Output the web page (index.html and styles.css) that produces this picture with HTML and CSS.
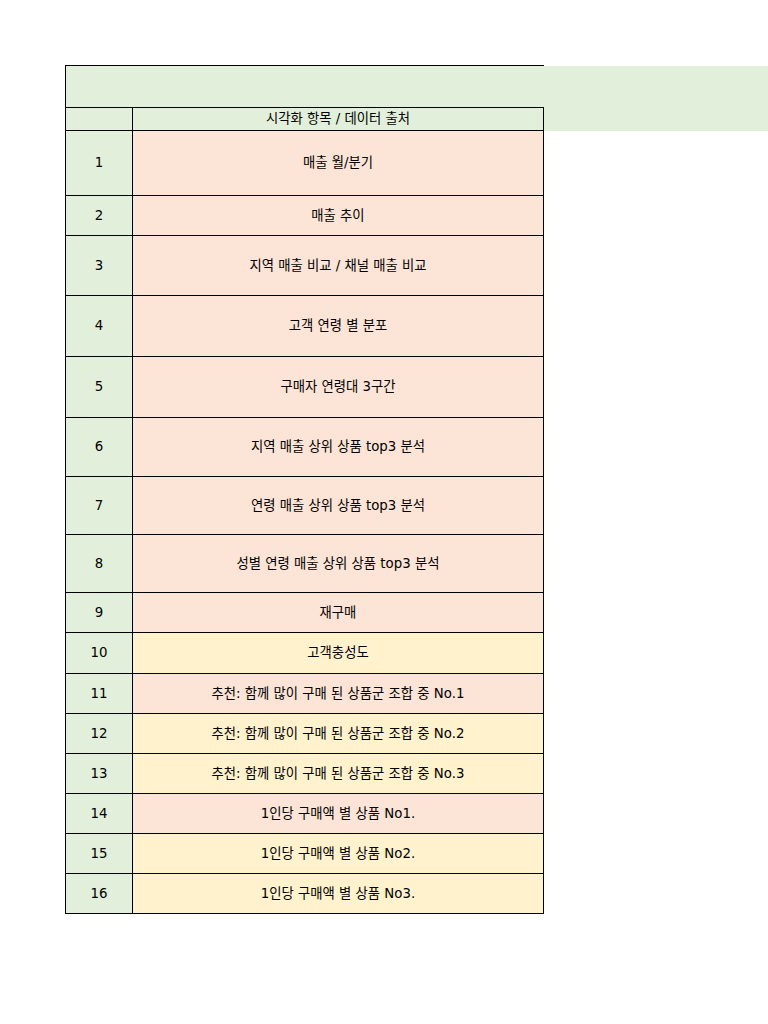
FILE: index.html
```html
<!DOCTYPE html>
<html lang="ko">
<head>
<meta charset="utf-8">
<title>시각화 항목</title>
<link rel="stylesheet" href="styles.css">
</head>
<body>
<table class="sheet">
  <colgroup>
    <col class="c-num">
    <col class="c-main">
    <col class="c-rest">
  </colgroup>
  <tr class="r-title">
    <td class="title" colspan="2"></td>
    <td class="band"></td>
  </tr>
  <tr class="r-head">
    <td class="num g"></td>
    <td class="main g">시각화 항목 / 데이터 출처</td>
    <td class="band"></td>
  </tr>
  <tr class="h65"><td class="num g">1</td><td class="main p">매출 월/분기</td><td></td></tr>
  <tr class="h40"><td class="num g">2</td><td class="main p">매출 추이</td><td></td></tr>
  <tr class="h60"><td class="num g">3</td><td class="main p">지역 매출 비교 / 채널 매출 비교</td><td></td></tr>
  <tr class="h61"><td class="num g">4</td><td class="main p">고객 연령 별 분포</td><td></td></tr>
  <tr class="h61"><td class="num g">5</td><td class="main p">구매자 연령대 3구간</td><td></td></tr>
  <tr class="h59"><td class="num g">6</td><td class="main p">지역 매출 상위 상품 top3 분석</td><td></td></tr>
  <tr class="h58"><td class="num g">7</td><td class="main p">연령 매출 상위 상품 top3 분석</td><td></td></tr>
  <tr class="h58"><td class="num g">8</td><td class="main p">성별 연령 매출 상위 상품 top3 분석</td><td></td></tr>
  <tr class="h40"><td class="num g">9</td><td class="main p">재구매</td><td></td></tr>
  <tr class="h41"><td class="num g">10</td><td class="main y">고객충성도</td><td></td></tr>
  <tr class="h40"><td class="num g">11</td><td class="main p">추천: 함께 많이 구매 된 상품군 조합 중 No.1</td><td></td></tr>
  <tr class="h40"><td class="num g">12</td><td class="main y">추천: 함께 많이 구매 된 상품군 조합 중 No.2</td><td></td></tr>
  <tr class="h40"><td class="num g">13</td><td class="main y">추천: 함께 많이 구매 된 상품군 조합 중 No.3</td><td></td></tr>
  <tr class="h40"><td class="num g">14</td><td class="main p">1인당 구매액 별 상품 No1.</td><td></td></tr>
  <tr class="h40"><td class="num g">15</td><td class="main y">1인당 구매액 별 상품 No2.</td><td></td></tr>
  <tr class="h40"><td class="num g">16</td><td class="main y">1인당 구매액 별 상품 No3.</td><td></td></tr>
</table>
</body>
</html>
```

FILE: styles.css
```css
html, body {
  margin: 0;
  padding: 0;
  background: #ffffff;
}

body {
  padding: 65px 0 0 65px;
  font-family: "DejaVu Sans", "Noto Sans CJK KR", sans-serif;
  font-size: 13.33px;
  color: #000000;
}

.sheet {
  border-collapse: collapse;
  table-layout: fixed;
  width: 703px;
}

.c-num { width: 67px; }
.c-main { width: 411px; }
.c-rest { width: 225px; }

.sheet td {
  padding: 0;
  text-align: center;
  vertical-align: middle;
  line-height: 16px;
}

.title {
  height: 41px;
  background: #e2efda;
  border-top: 1px solid #000;
  border-left: 1px solid #000;
  border-bottom: 1px solid #000;
}

.band {
  background: #e2efda;
}

.r-head td.num,
.r-head td.main {
  height: 22px;
}

.num,
.main {
  border: 1px solid #000;
}

.g { background: #e2efda; }
.p { background: #fce4d6; }
.y { background: #fff2cc; }

.h65 td { height: 64px; }
.h61 td { height: 60px; }
.h60 td { height: 59px; }
.h59 td { height: 58px; }
.h58 td { height: 57px; }
.h41 td { height: 40px; }
.h40 td { height: 39px; }
```
